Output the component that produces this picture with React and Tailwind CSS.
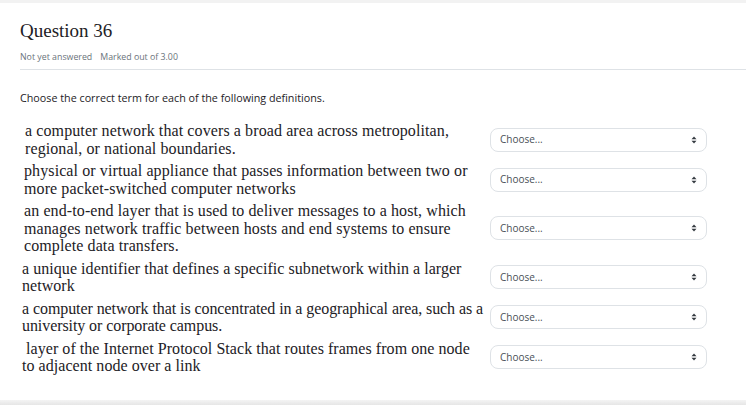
const rows = [
  {
    lines: [
      "a computer network that covers a broad area across metropolitan,",
      "regional, or national boundaries.",
    ],
    pad: "pl-[25px]",
    ls: "0.1px",
  },
  {
    lines: [
      "physical or virtual appliance that passes information between two or",
      "more packet-switched computer networks",
    ],
    pad: "pl-[24px]",
    ls: "0.1px",
  },
  {
    lines: [
      "an end-to-end layer that is used to deliver messages to a host, which",
      "manages network traffic between hosts and end systems to ensure",
      "complete data transfers.",
    ],
    pad: "pl-[24px]",
    ls: "0.1px",
  },
  {
    lines: [
      "a unique identifier that defines a specific subnetwork within a larger",
      "network",
    ],
    pad: "pl-[22px]",
    ls: "0.05px",
  },
  {
    lines: [
      "a computer network that is concentrated in a geographical area, such as a",
      "university or corporate campus.",
    ],
    pad: "pl-[22px]",
    ls: "-0.08px",
  },
  {
    lines: [
      "\u00a0layer of the Internet Protocol Stack that routes frames from one node",
      "to adjacent node over a link",
    ],
    pad: "pl-[22px]",
    ls: "0.05px",
  },
];

function ChooseSelect() {
  return (
    <div className="flex h-[24px] w-[217px] shrink-0 items-center justify-between rounded-[8px] border border-[#dee2e6] bg-white pl-[9px] pr-[9px]">
      <span className="text-[10px] text-[#495057]" style={{ fontFamily: '"Open Sans", sans-serif' }}>
        Choose...
      </span>
      <svg width="6" height="8" viewBox="0 0 6 8">
        <path d="M3 0.5 L5.5 3.2 H0.5 Z" fill="#343a40" />
        <path d="M3 7.5 L5.5 4.8 H0.5 Z" fill="#343a40" />
      </svg>
    </div>
  );
}

export default function App() {
  return (
    <div className="flex h-[405px] w-[746px] flex-col overflow-hidden bg-white">
      <div className="h-[3px] bg-[#f2f2f2]" />
      <div className="flex-1">
        <div className="pl-[20px]">
          <h2
            className="pt-[16px] text-[19px] leading-[24px] text-[#1d2125]"
            style={{ fontFamily: '"Liberation Serif", serif' }}
          >
            Question 36
          </h2>
          <div
            className="mt-[8px] flex gap-[8px] text-[8.8px] leading-[12px] text-[#6a737b]"
            style={{ fontFamily: '"Open Sans", sans-serif' }}
          >
            <span>Not yet answered</span>
            <span>Marked out of 3.00</span>
          </div>
          <div className="mt-[6px] h-px bg-[#dee2e6]" />
          <p
            className="mt-[21px] text-[10.75px] leading-[14px] text-[#1d2125]"
            style={{ fontFamily: '"Open Sans", sans-serif' }}
          >
            Choose the correct term for each of the following definitions.
          </p>
        </div>
        <div className="mt-[17px] flex flex-col gap-[5px]">
          {rows.map((r, i) => (
            <div key={i} className="flex items-center">
              <div
                className={`w-[490px] shrink-0 ${r.pad} text-[16px] leading-[17.5px] text-[#1d2125]`}
                style={{ fontFamily: '"Liberation Serif", serif', letterSpacing: r.ls }}
              >
                {r.lines.map((l, j) => (
                  <div key={j} className="whitespace-nowrap">
                    {l}
                  </div>
                ))}
              </div>
              <ChooseSelect />
            </div>
          ))}
        </div>
      </div>
      <div className="h-[5px] bg-gradient-to-b from-[#f4f4f4] to-[#e6e6e6]" />
    </div>
  );
}
